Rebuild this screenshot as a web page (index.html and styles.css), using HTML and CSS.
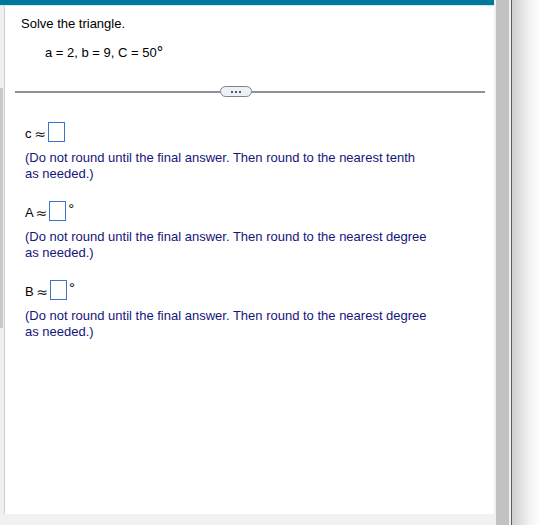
FILE: index.html
```html
<!DOCTYPE html>
<html lang="en">
<head>
    <meta charset="UTF-8">
    <title>Solve the triangle</title>
    <link rel="stylesheet" href="styles.css">
</head>
<body>
    <div class="window">
        <div class="main">
            <div class="topbar"></div>
            <div class="body-row">
                <div class="side"><div class="side-thumb"></div></div>
                <div class="panel">
                    <p class="question">Solve the triangle.</p>
                    <p class="given">a = 2, b = 9, C = 50<span class="deg-big">°</span></p>

                    <div class="divider">
                        <span class="pill"><i></i><i></i><i></i></span>
                    </div>

                    <div class="answers">
                        <div class="answer">
                            <div class="answer-row">c <span class="approx">≈</span><span class="box"></span></div>
                            <p class="hint">(Do not round until the final answer. Then round to the nearest tenth as needed.)</p>
                        </div>
                        <div class="answer">
                            <div class="answer-row">A <span class="approx">≈</span><span class="box"></span><span class="deg">°</span></div>
                            <p class="hint">(Do not round until the final answer. Then round to the nearest degree as needed.)</p>
                        </div>
                        <div class="answer">
                            <div class="answer-row">B <span class="approx">≈</span><span class="box"></span><span class="deg">°</span></div>
                            <p class="hint">(Do not round until the final answer. Then round to the nearest degree as needed.)</p>
                        </div>
                    </div>
                </div>
            </div>
            <div class="footer"></div>
        </div>
        <div class="scrollbar">
            <div class="track"></div>
            <div class="edge"></div>
            <div class="shade"></div>
        </div>
    </div>
</body>
</html>
```

FILE: styles.css
```css
* {
    margin: 0;
    padding: 0;
    box-sizing: border-box;
}
body {
    background-color: #fff;
    color: #000;
    font-family: "Liberation Sans", Arial, sans-serif;
    font-size: 13px;
    line-height: 16px;
}
.window {
    display: flex;
    width: 553px;
    height: 525px;
    overflow: hidden;
}
.main {
    width: 494px;
    display: flex;
    flex-direction: column;
}
.topbar {
    height: 6px;
    background: #00789c;
    border-bottom: 1px solid #d3e4ec;
}
.body-row {
    flex: 1;
    display: flex;
}
.side {
    width: 4px;
    background: #f0f0f0;
    padding-top: 82px;
}
.side-thumb {
    height: 240px;
    background: #c8c8c8;
    margin-right: 1px;
}
.panel {
    flex: 1;
    background: #fff;
    border-left: 1px solid #c7cfe2;
}
.footer {
    height: 11px;
    background: #f1f1f1;
}
.question {
    margin: 10px 0 0 16px;
}
.given {
    margin: 13px 0 0 40px;
}
.deg-big {
    font-size: 16px;
    line-height: 0;
    position: relative;
    top: 1px;
}
.divider {
    position: relative;
    margin: 30px 9px 0 10px;
    height: 2px;
    background: #8b9199;
}
.pill {
    position: absolute;
    left: 205px;
    top: -5px;
    width: 32px;
    height: 11px;
    border: 1px solid #7d838c;
    border-radius: 6px;
    background: #eef1f5;
    display: flex;
    justify-content: center;
    align-items: center;
    gap: 2px;
}
.pill i {
    width: 2px;
    height: 2px;
    background: #555b66;
}
.answers {
    margin: 29px 0 0 20px;
}
.answer {
    margin-bottom: 19px;
}
.answer-row {
    display: flex;
    align-items: flex-end;
    height: 20px;
    line-height: 16px;
    white-space: pre;
}
.approx {
    font-family: "DejaVu Sans", sans-serif;
    font-size: 14px;
    line-height: 15px;
    margin-left: -1px;
    margin-right: 2px;
    color: #222;
}
.box {
    display: inline-block;
    width: 17px;
    height: 20px;
    border: 1px solid #3d73c8;
    background: #fff;
}
.deg {
    align-self: flex-start;
    font-size: 15px;
    line-height: 12px;
    margin-top: 2px;
    margin-left: 2px;
}
.hint {
    color: #15157a;
    margin-top: 8px;
    width: 405px;
}
.scrollbar {
    flex: 1;
    display: flex;
    background: #f0f0f0;
    padding-left: 2px;
}
.track {
    width: 13px;
    background: #c2c2c2;
    margin-right: 2px;
}
.edge {
    width: 1px;
    background: #5c5c5c;
}
.shade {
    flex: 1;
    background: linear-gradient(to right, #cfcfcf, #f4f4f4 45%, #fff 70%);
}
```
